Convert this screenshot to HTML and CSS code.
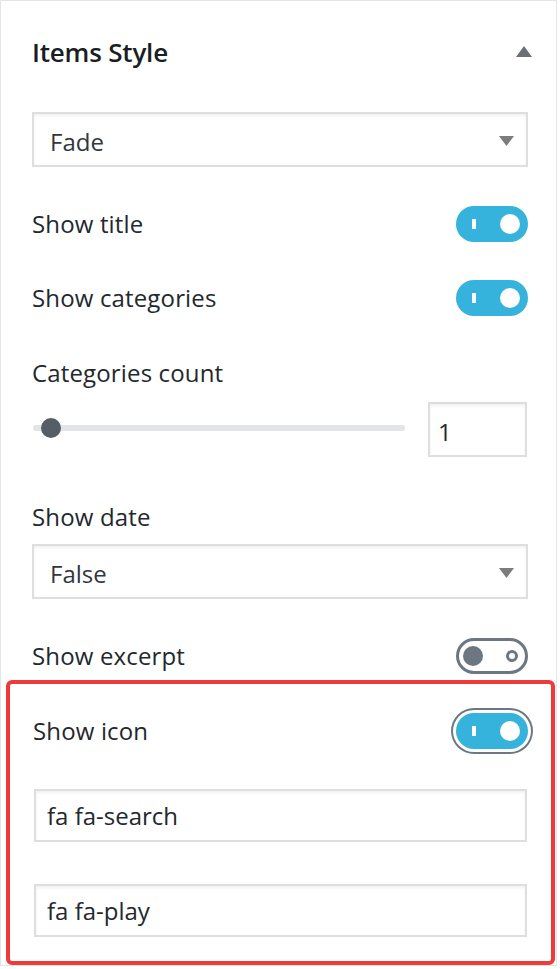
FILE: index.html
```html
<!DOCTYPE html>
<html lang="en">
<head>
  <meta charset="UTF-8">
  <title>Items Style</title>
  <link rel="stylesheet" href="styles.css">
</head>
<body>

  <div class="panel">

    <!-- Panel header -->
    <div class="panel-head">
      <h2>Items Style</h2>
      <svg class="collapse" width="16" height="11" viewBox="0 0 16 11"><path d="M8 0 L16 11 L0 11 Z" fill="#6c7075"/></svg>
    </div>

    <div class="select-wrap first">
      <select>
        <option>Fade</option>
      </select>
      <svg class="caret" width="15" height="10" viewBox="0 0 15 10"><path d="M0 0 L15 0 L7.5 10 Z" fill="#7c7c7c"/></svg>
    </div>

    <div class="row toggle-row title-row">
      <span class="label">Show title</span>
      <span class="toggle on"><i class="bar"></i><i class="knob"></i></span>
    </div>

    <div class="row toggle-row cat-row">
      <span class="label">Show categories</span>
      <span class="toggle on"><i class="bar"></i><i class="knob"></i></span>
    </div>

    <div class="label block count-label">Categories count</div>
    <div class="row range-row">
      <div class="range">
        <div class="track"></div>
        <div class="thumb"></div>
      </div>
      <input type="number" class="num" value="1">
    </div>

    <div class="label block date-label">Show date</div>
    <div class="select-wrap">
      <select>
        <option>False</option>
      </select>
      <svg class="caret" width="15" height="10" viewBox="0 0 15 10"><path d="M0 0 L15 0 L7.5 10 Z" fill="#7c7c7c"/></svg>
    </div>

    <div class="row toggle-row excerpt-row">
      <span class="label">Show excerpt</span>
      <span class="toggle off"><i class="knob"></i><i class="ring"></i></span>
    </div>

    <!-- Highlighted block -->
    <div class="highlight">
      <div class="row toggle-row">
        <span class="label">Show icon</span>
        <span class="toggle on focus"><i class="bar"></i><i class="knob"></i></span>
      </div>
      <input type="text" class="text-field first-field" value="fa fa-search">
      <input type="text" class="text-field" value="fa fa-play">
    </div>

  </div>

</body>
</html>
```

FILE: styles.css
```css
* {
  box-sizing: border-box;
}

body {
  margin: 0;
  background: #fff;
  font-family: 'Open Sans', 'Noto Sans', sans-serif;
  color: #23282d;
}

.panel {
  width: 557px;
  height: 966px;
  border: 1px solid #e2e4e7;
  padding: 34px 28px 0 31px;
}

.panel-head {
  display: flex;
  align-items: center;
  justify-content: space-between;
  height: 34px;
}

.panel-head h2 {
  margin: 0;
  font-size: 26px;
  font-weight: 600;
  line-height: 34px;
  color: #191e23;
  letter-spacing: -0.2px;
}

.collapse {
  margin-right: -4px;
  margin-top: -2px;
}

.label {
  font-size: 24px;
  line-height: 34px;
  color: #23282d;
  letter-spacing: 0.15px;
}

.label.block {
  display: block;
}

/* selects */
.select-wrap {
  position: relative;
  height: 55px;
  margin-top: 10px;
}

.select-wrap.first {
  margin-top: 43px;
}

.select-wrap select {
  appearance: none;
  -webkit-appearance: none;
  width: 100%;
  height: 55px;
  border: 2px solid #dedede;
  border-radius: 0;
  box-shadow: inset 0 2px 3px rgba(0, 0, 0, 0.06);
  background: #fff;
  padding: 4px 16px 0 16px;
  font-family: inherit;
  font-size: 24px;
  color: #32373c;
}

.caret {
  position: absolute;
  right: 14px;
  top: 24px;
}

/* rows */
.row {
  display: flex;
  align-items: center;
  justify-content: space-between;
}

.toggle-row {
  height: 36px;
}

.title-row {
  margin-top: 39px;
}

.cat-row {
  margin-top: 38px;
}

.count-label {
  margin-top: 40px;
}

.date-label {
  margin-top: 43px;
}

.excerpt-row {
  margin-top: 39px;
}

/* toggles */
.toggle {
  position: relative;
  width: 72px;
  height: 36px;
  border-radius: 18px;
  flex-shrink: 0;
}

.toggle.on {
  background: #36b3dc;
}

.toggle.on .bar {
  position: absolute;
  left: 16px;
  top: 13px;
  width: 4px;
  height: 10px;
  background: #fff;
}

.toggle.on .knob {
  position: absolute;
  right: 8px;
  top: 8px;
  width: 20px;
  height: 20px;
  border-radius: 50%;
  background: #fff;
}

.toggle.off {
  border: 3px solid #6c7781;
  background: #fff;
}

.toggle.off .knob {
  position: absolute;
  left: 4px;
  top: 5px;
  width: 20px;
  height: 20px;
  border-radius: 50%;
  background: #6c7781;
}

.toggle.off .ring {
  position: absolute;
  right: 7px;
  top: 9px;
  width: 12px;
  height: 12px;
  border-radius: 50%;
  border: 3px solid #6c7781;
}

.toggle.focus {
  box-shadow: 0 0 0 3px #fff, 0 0 0 5px #6c7781;
}

/* range */
.range-row {
  margin-top: 12px;
  height: 55px;
}

.range {
  position: relative;
  flex: 1;
  height: 20px;
  margin-right: 23px;
  margin-top: -4px;
}

.track {
  position: absolute;
  left: 1px;
  right: 0;
  top: 7px;
  height: 6px;
  border-radius: 3px;
  background: #e2e4e7;
}

.thumb {
  position: absolute;
  left: 9px;
  top: 0;
  width: 20px;
  height: 20px;
  border-radius: 50%;
  background: #555d66;
}

.num {
  width: 99px;
  height: 55px;
  border: 2px solid #dedede;
  box-shadow: inset 0 2px 3px rgba(0, 0, 0, 0.06);
  padding: 3px 8px 0 8px;
  font-family: inherit;
  font-size: 24px;
  color: #23282d;
  margin-right: 1px;
  -moz-appearance: textfield;
}

.num::-webkit-inner-spin-button,
.num::-webkit-outer-spin-button {
  -webkit-appearance: none;
  margin: 0;
}

/* highlighted area */
.highlight {
  margin: 6px -27px 0 -26px;
  border: 4px solid #f03a3a;
  border-radius: 6px;
  padding: 29px 23px 24px 23px;
}

.text-field {
  display: block;
  width: calc(100% - 2px);
  margin: 42px 1px 0 1px;
  height: 53px;
  border: 2px solid #dedede;
  box-shadow: inset 0 2px 3px rgba(0, 0, 0, 0.06);
  padding: 0 11px;
  font-family: inherit;
  font-size: 24px;
  color: #23282d;
}

.text-field.first-field {
  margin-top: 40px;
}
```
